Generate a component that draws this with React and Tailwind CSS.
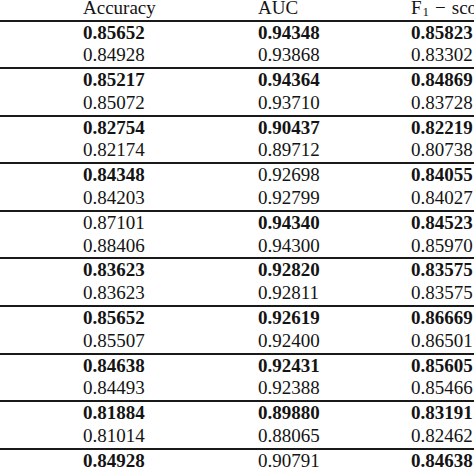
import React from 'react';

// Each group: [bold row, regular row]; a cell is [value, bold]
const groups = [
  [
    [['0.85652', true], ['0.94348', true], ['0.85823', true]],
    [['0.84928', false], ['0.93868', false], ['0.83302', false]],
  ],
  [
    [['0.85217', true], ['0.94364', true], ['0.84869', true]],
    [['0.85072', false], ['0.93710', false], ['0.83728', false]],
  ],
  [
    [['0.82754', true], ['0.90437', true], ['0.82219', true]],
    [['0.82174', false], ['0.89712', false], ['0.80738', false]],
  ],
  [
    [['0.84348', true], ['0.92698', false], ['0.84055', true]],
    [['0.84203', false], ['0.92799', false], ['0.84027', false]],
  ],
  [
    [['0.87101', false], ['0.94340', true], ['0.84523', true]],
    [['0.88406', false], ['0.94300', false], ['0.85970', false]],
  ],
  [
    [['0.83623', true], ['0.92820', true], ['0.83575', true]],
    [['0.83623', false], ['0.92811', false], ['0.83575', false]],
  ],
  [
    [['0.85652', true], ['0.92619', true], ['0.86669', true]],
    [['0.85507', false], ['0.92400', false], ['0.86501', false]],
  ],
  [
    [['0.84638', true], ['0.92431', true], ['0.85605', true]],
    [['0.84493', false], ['0.92388', false], ['0.85466', false]],
  ],
  [
    [['0.81884', true], ['0.89880', true], ['0.83191', true]],
    [['0.81014', false], ['0.88065', false], ['0.82462', false]],
  ],
  [
    [['0.84928', true], ['0.90791', false], ['0.84638', true]],
    [['0.84493', false], ['0.89993', false], ['0.84444', false]],
  ],
];

function Row({ cells }) {
  return (
    <div className="grid grid-cols-[83px_175px_153px_63px] h-[22.8px] leading-[22.8px]">
      <div />
      {cells.map(([value, bold], i) => (
        <div key={i} className={bold ? 'font-bold whitespace-nowrap' : 'whitespace-nowrap'}>
          {value}
        </div>
      ))}
    </div>
  );
}

export default function App() {
  return (
    <div
      className="w-[474px] h-[474px] overflow-hidden bg-white text-[19px] text-[#141414]"
      style={{ fontFamily: '"Liberation Serif", "Times New Roman", serif' }}
    >
      {/* Header */}
      <div className="grid grid-cols-[83px_175px_153px_63px] h-[19.5px] leading-[16px]">
        <div />
        <div>Accuracy</div>
        <div>AUC</div>
        <div className="whitespace-nowrap">
          F<sub className="text-[13px] relative top-[2px] align-baseline ml-[1px]">1</sub>
          <span className="px-[6px]">−</span>score
        </div>
      </div>

      {/* Result pairs */}
      {groups.map((group, g) => (
        <div key={g} className="border-t-2 border-[#1a1a1a]">
          {group.map((cells, r) => (
            <Row key={r} cells={cells} />
          ))}
        </div>
      ))}
    </div>
  );
}
